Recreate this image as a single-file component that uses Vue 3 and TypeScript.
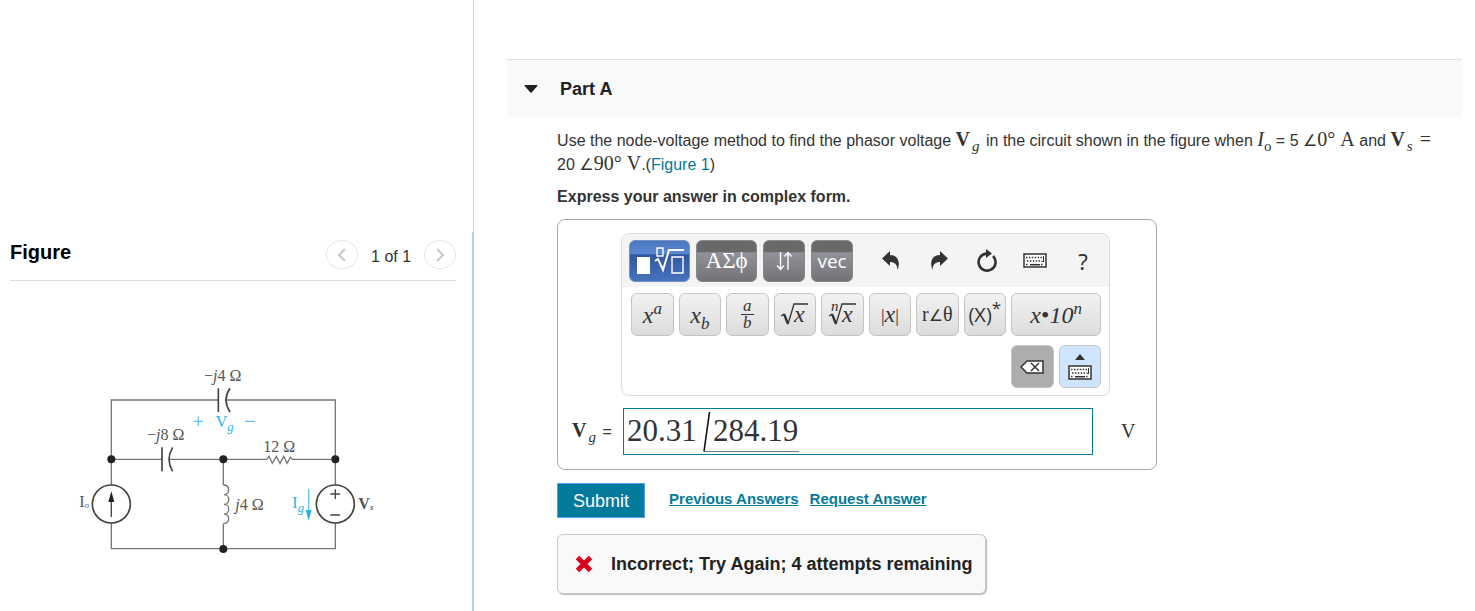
<script setup lang="ts">
import { ref } from 'vue'

const open = ref(true)
const magnitude = ref('20.31')
const angle = ref('284.19')
</script>

<template>
  <div class="page">
    <aside class="side">
      <div class="figure-head">
        <h2>Figure</h2>
        <nav class="pager" aria-label="Figures">
          <button type="button" class="round" aria-label="Previous figure">
            <svg width="10" height="14" viewBox="0 0 10 14"><path d="M8 1 2 7l6 6" /></svg>
          </button>
          <span>1 of 1</span>
          <button type="button" class="round" aria-label="Next figure">
            <svg width="10" height="14" viewBox="0 0 10 14"><path d="M2 1l6 6-6 6" /></svg>
          </button>
        </nav>
      </div>
      <svg class="circuit" viewBox="0 0 960 600" role="img" aria-label="Circuit diagram">
        <g class="wire">
          <path d="M124 375V120H445M467 120H796V375M124 298H276M298 298H590L597 289 607 310 619 289 630 310 641 289 651 310 661 292 667 298H796M460 298V375M460 491V566M124 489V566H796V489" />
          <path d="M460 375c21 0 21 29 2 29 19 0 19 29 0 29 19 0 19 29 0 29 19 0 19 29-2 29" />
        </g>
        <g class="part">
          <path d="M445 85V156M480 85Q456 120 480 156M276 262V334M308 262Q286 298 308 334" />
          <circle cx="124" cy="432" r="57" />
          <circle cx="796" cy="432" r="57" />
          <path class="thin" d="M124 471V420M781 402h29M796 388v29M781 465h29" />
        </g>
        <path class="solid" d="M124 394l-9 32h18z" />
        <circle class="solid" cx="124" cy="298" r="12" />
        <circle class="solid" cx="460" cy="298" r="12" />
        <circle class="solid" cx="796" cy="298" r="12" />
        <circle class="solid" cx="460" cy="567" r="12" />
        <path class="blue-line" d="M716 387V455M370 184h29M385 170v29M525 184h29" />
        <path class="blue" d="M716 482l-9-32h18z" />
        <text x="402" y="63">−<tspan class="it">j</tspan>4 Ω</text>
        <text x="231" y="240">−<tspan class="it">j</tspan>8 Ω</text>
        <text x="580" y="276">12 Ω</text>
        <text x="496" y="450"><tspan class="it">j</tspan>4 Ω</text>
        <text class="blue" x="437" y="200">V<tspan class="it small" dy="13">g</tspan></text>
        <text class="blue" x="667" y="444">I<tspan class="it small" dy="13">g</tspan></text>
        <text x="28" y="442">I<tspan class="it tiny" dy="3">o</tspan></text>
        <text class="strong" x="865" y="446">V<tspan class="it tiny" dy="3">s</tspan></text>
      </svg>
    </aside>

    <main class="main">
      <section class="part-a">
        <header class="part-head">
          <button type="button" class="toggle" :aria-expanded="open" @click="open = !open">
            <svg width="14" height="8" viewBox="0 0 14 8"><path d="M1 0h12q1 0 .3 .9L7.600 7.500q-.6 .6-1.200 0L.7 .9Q0 0 1 0z" /></svg>
            <span>Part A</span>
          </button>
        </header>
        <div v-if="open" class="body">
          <p class="prompt">
            Use the node-voltage method to find the phasor voltage <span class="math"><b>V</b><i class="sub">g</i></span> in the circuit shown in the figure when <span class="math"><i>I</i><span class="sub">o</span></span> = 5 <span class="math"><span class="angle">∠</span>0°&nbsp;A</span> and <span class="math"><b>V</b><i class="sub">s</i> =</span><br>
            20 <span class="math"><span class="angle">∠</span>90°&nbsp;V</span>.(<a href="#figure">Figure 1</a>)
          </p>
          <p class="instruct">Express your answer in complex form.</p>

          <form @submit.prevent>
            <div class="answer">
              <div class="palette">
                <div class="tools">
                  <button type="button" class="tab tab-wide active" aria-label="Templates">
                    <svg width="48" height="28" viewBox="0 0 48 28">
                      <path class="fill" d="M1 10h13v17H1z" />
                      <path class="line" d="M19 14l3-2 5 11L33 3H48" />
                      <path class="line fine" d="M21 1h6v8h-6zM36 10h11v16h-11z" />
                    </svg>
                  </button>
                  <button type="button" class="tab tab-wide greek">ΑΣϕ</button>
                  <button type="button" class="tab" aria-label="Arrows">
                    <svg width="18" height="20" viewBox="0 0 18 20"><path class="line fine" d="M5.500 1v17.500M2 14.500l3.500 4 3.500-4M13 19V1.500M9.500 5.500 13 1.500 16.500 5.500" /></svg>
                  </button>
                  <button type="button" class="tab vec">vec</button>
                  <div class="actions">
                    <button type="button" class="icon" aria-label="Undo">
                      <svg width="18" height="20" viewBox="0 0 18 20"><path d="M0 7.500 8 0V4C15 4 19 10 15.500 19 15.500 13 12 11 8 11v4z" /></svg>
                    </button>
                    <button type="button" class="icon" aria-label="Redo">
                      <svg width="18" height="20" viewBox="0 0 18 20"><path d="M18 7.500 10 0V4C3 4-1 10 2.500 19 2.500 13 6 11 10 11v4z" /></svg>
                    </button>
                    <button type="button" class="icon" aria-label="Reset">
                      <svg width="20" height="24" viewBox="0 0 20 24"><path class="ring" d="M16 7A8.500 8.500 0 1 1 10 4.600" /><path d="M9 0l6 4.500L9 9z" /></svg>
                    </button>
                    <button type="button" class="icon" aria-label="Keyboard shortcuts">
                      <svg width="24" height="16" viewBox="0 0 24 16"><path class="key-frame" d="M1 1h22v13H1z" /><path class="keys" d="M3 4.500h16M4 8h15M3 11.500h3M18 11.500h3" /><path d="M7 11h10v1.500H7zM20 3h1v6h-2V8h1z" /></svg>
                    </button>
                    <button type="button" class="icon help" aria-label="Help">?</button>
                  </div>
                </div>
                <div class="keypad">
                  <button type="button" class="key"><span><i>x</i><sup><i>a</i></sup></span></button>
                  <button type="button" class="key"><span><i>x</i><sub><i>b</i></sub></span></button>
                  <button type="button" class="key frac"><i>a</i><i>b</i></button>
                  <button type="button" class="key" aria-label="Square root of x">
                    <svg width="27" height="35" viewBox="0 -6 27 35"><path class="root" d="M0 13l3-2" /><path class="root thick" d="M3 11l4 10" /><path class="root" d="M7 21 13 1H27" /><text x="13" y="19">x</text></svg>
                  </button>
                  <button type="button" class="key" aria-label="nth root of x">
                    <svg width="27" height="35" viewBox="0 -6 27 35"><path class="root" d="M0 13l3-2" /><path class="root thick" d="M3 11l4 10" /><path class="root" d="M7 21 13 1H27" /><text x="13" y="19">x</text><text class="index" x="2" y="8">n</text></svg>
                  </button>
                  <button type="button" class="key"><span><span class="bar">|</span><i>x</i><span class="bar">|</span></span></button>
                  <button type="button" class="key polar"><span>r<span class="angle">∠</span>θ</span></button>
                  <button type="button" class="key conj"><span>(X)<sup>*</sup></span></button>
                  <button type="button" class="key sci"><span><i>x</i>•<i>10</i><sup><i>n</i></sup></span></button>
                  <button type="button" class="key erase" aria-label="Backspace">
                    <svg width="24" height="14" viewBox="0 0 24 14"><path class="erase-body" d="M7 1h16v12H7L1 7z" /><path class="cross" d="M11 3l8 8M19 3l-8 8" /></svg>
                  </button>
                  <button type="button" class="key hide" aria-label="Hide keypad">
                    <svg width="24" height="26" viewBox="0 0 24 26"><path d="M12 0l5 6H7z" /><g transform="translate(0 11)"><path class="key-frame" d="M1 1h22v13H1z" /><path class="keys" d="M3 4.500h16M4 8h15M3 11.500h3M18 11.500h3" /><path d="M7 11h10v1.500H7zM20 3h1v6h-2V8h1z" /></g></svg>
                  </button>
                </div>
              </div>
              <div class="entry">
                <label class="name" for="magnitude"><span class="math"><b>V</b><i class="sub">g</i></span> =</label>
                <div class="field">
                  <input id="magnitude" v-model="magnitude" class="magnitude" type="text">
                  <svg class="slash" width="8" height="41" viewBox="0 0 8 41"><path d="M1 40.500 6.500 1" /><path class="base" d="M1 40.500H8" /></svg>
                  <input v-model="angle" class="degrees" type="text" aria-label="Angle">
                </div>
                <span class="unit">V</span>
              </div>
            </div>
            <div class="submit-row">
              <button type="submit" class="submit">Submit</button>
              <a href="#previous">Previous Answers</a>
              <a href="#request">Request Answer</a>
            </div>
          </form>
          <div class="feedback" role="status">
            <svg width="18" height="18" viewBox="0 0 18 18"><path d="M2.500 2.500l13 13M15.500 2.500l-13 13" /></svg>
            <span>Incorrect; Try Again; 4 attempts remaining</span>
          </div>
        </div>
      </section>
    </main>
  </div>
</template>

<style>
body { background: #fff; }
</style>

<style scoped>
* { box-sizing: border-box; }
button { font: inherit; color: inherit; padding: 0; margin: 0; border: 0; background: none; cursor: pointer; }
p, h2 { margin: 0; }
svg { display: block; flex: none; }
.page {
  display: grid;
  grid-template-columns: 9fr 19fr;
  min-height: 100vh;
  font: 16px/24px "Liberation Sans", Arial, sans-serif;
  color: #333;
}
.side {
  padding: 232px 18px 0 10px;
  background:
    linear-gradient(#d0d3d8, #d0d3d8) right top / 1px 232px no-repeat,
    linear-gradient(#bccde0, #bccde0) right 232px / 2px 100% no-repeat;
}
.figure-head {
  display: flex;
  justify-content: space-between;
  height: 49px;
  border-bottom: 1px solid #ddd;
}
h2 { font-size: 20px; line-height: 40px; color: #000; }
.pager { display: flex; gap: 13px; padding-top: 8px; line-height: 34px; }
.round {
  display: flex;
  align-items: center;
  justify-content: center;
  width: 32px;
  height: 29px;
  border: 1px solid #e6e6e6;
  border-radius: 50%;
}
.round path { fill: none; stroke: #c8c8c8; stroke-width: 2; }

.circuit { width: 320px; margin: 79px 0 0 60px; font: 48px "Liberation Serif", serif; fill: #555; }
.wire { fill: none; stroke: #777; stroke-width: 4; }
.part { fill: none; stroke: #444; stroke-width: 5; }
.thin { stroke-width: 4; }
.solid { fill: #222; }
.blue { fill: #2ab4ec; }
.blue-line { fill: none; stroke: #5cc6f0; stroke-width: 4; }
.it { font-style: italic; }
.small { font-size: 38px; }
.tiny { font-size: 26px; }
.strong { font-weight: bold; }

.main { padding: 59px 13px 0 33px; }
.part-head { height: 58px; border-top: 1px solid #ddd; background: #f9f9f9; }
.toggle {
  display: flex;
  align-items: center;
  gap: 22px;
  height: 57px;
  padding-left: 17px;
  font-size: 18px;
  font-weight: bold;
  color: #222;
}
.toggle path { fill: #222; }
.body { padding: 12px 0 16px 50px; }
.math { font: 20px/20px "Liberation Serif", serif; white-space: nowrap; }
.sub { position: relative; top: 5px; font-size: 15px; }
b + .sub { margin: 0 2px; }
.angle { font-family: "DejaVu Sans", sans-serif; font-size: 16px; }
a { color: #047a9c; }
.prompt a { text-decoration: none; }
.instruct { margin: 8px 0 10px; font-weight: bold; }

.answer {
  display: flex;
  flex-direction: column;
  max-width: 600px;
  height: 251px;
  padding: 13px 15px 0 14px;
  border: 1px solid #aaa;
  border-radius: 8px;
}
.palette {
  margin: 0 31px 0 49px;
  height: 163px;
  border: 1px solid #ddd;
  border-radius: 8px;
}
.tools {
  display: flex;
  gap: 6px;
  height: 53px;
  padding: 6px 0 6px 7px;
  background: #f4f4f4;
  border-radius: 8px 8px 0 0;
}
.tab {
  display: flex;
  align-items: center;
  justify-content: center;
  flex: none;
  width: 42px;
  height: 42px;
  border: 1px solid #888;
  border-radius: 6px;
  background: linear-gradient(#696969, #696969 28%, #92929a 29%, #727276);
  color: #fff;
}
.tab-wide { width: 61px; }
.active { border-color: #7391c8; background: linear-gradient(#4a78c0, #5b88d0 33%, #3058a0 34%, #4673bc); }
.tab .fill { fill: #fff; }
.tab .line { fill: none; stroke: #fff; stroke-width: 2; }
.tab .fine { stroke-width: 1.4; }
.greek { font-family: "Liberation Serif", serif; font-size: 23px; }
.vec { font-family: "Open Sans", sans-serif; font-size: 19px; }
.actions { display: flex; gap: 6px; margin-left: 11px; }
.icon { display: flex; align-items: center; justify-content: center; flex: none; width: 42px; height: 42px; fill: #333; }
.ring { fill: none; stroke: #333; stroke-width: 2.600; }
.key-frame { fill: #fff; stroke: #333; stroke-width: 1.500; }
.keys { fill: none; stroke: #333; stroke-width: 1.500; stroke-dasharray: 1.500 1.400; }
.help { font: 22px "Noto Sans", sans-serif; }
.keypad {
  display: grid;
  grid-template-columns: repeat(10, 1fr);
  gap: 9px 5px;
  padding: 6px 8px 0 9px;
}
.key {
  display: flex;
  align-items: center;
  justify-content: center;
  height: 43px;
  border: 1px solid #c4c4c4;
  border-radius: 6px;
  background: linear-gradient(#f2f2f2, #dcdcdc);
  font: 24px/24px "Liberation Serif", serif;
}
.key sup, .key sub { font-size: 17px; line-height: 0; }
.frac { flex-direction: column; font-size: 17px; line-height: 16px; }
.frac i + i { padding: 0 2px; border-top: 1px solid #333; }
.root { fill: none; stroke: #333; stroke-width: 1.300; }
.thick { stroke-width: 2.400; }
.key text { font: italic 24px "Liberation Serif", serif; fill: #333; }
.key .index { font-size: 15px; }
.bar { font-size: 18px; }
.polar { font-size: 20px; }
.conj { font-family: "Open Sans", sans-serif; font-size: 20px; }
.sci { grid-column: span 2; }
.erase { grid-column: 9; background: #adadad; }
.erase-body { fill: #fff; stroke: #333; stroke-width: 1.500; }
.cross { fill: none; stroke: #333; stroke-width: 1.500; }
.hide { background: #cfe5ff; }
.hide svg { fill: #333; }
.entry { display: flex; align-items: center; margin-top: 12px; }
.name { width: 51px; white-space: nowrap; }
.field { display: flex; align-items: center; flex: 1; height: 47px; padding: 0 3px; border: 1px solid #047a9c; }
.field input {
  min-width: 0;
  height: 41px;
  padding: 0;
  border: 0;
  border-bottom: 1px solid transparent;
  outline: 0;
  background: none;
  font: 31px "Liberation Serif", serif;
  color: #333;
}
.field .magnitude { width: 76px; }
.field .degrees { width: 88px; padding-left: 2px; border-color: #777; }
.slash path { fill: none; stroke: #111; stroke-width: 1.600; }
.slash .base { stroke: #777; stroke-width: 1; }
.unit { width: 36px; margin-left: 28px; margin-right: -16px; font: 20px "Liberation Serif", serif; }

.submit-row { display: flex; align-items: center; margin-top: 13px; font-size: 15px; line-height: 20px; font-weight: bold; }
.submit {
  width: 88px;
  height: 35px;
  margin-right: 24px;
  border: 1px solid #5b9df5;
  background: #047a9c;
  color: #fff;
  font-size: 18px;
  font-weight: normal;
}
.submit-row a { padding-bottom: 3px; }
.submit-row a + a { margin-left: 11px; }
.feedback {
  display: flex;
  align-items: center;
  gap: 18px;
  width: fit-content;
  height: 60px;
  margin-top: 16px;
  padding: 0 12px 0 17px;
  border: 1px solid #c8c8c8;
  border-radius: 6px;
  box-shadow: 1px 1px 1px #bbb;
  background: #f9f9f9;
  color: #222;
  font-size: 18px;
  font-weight: bold;
}
.feedback path { stroke: #d9001f; stroke-width: 5; }
</style>
